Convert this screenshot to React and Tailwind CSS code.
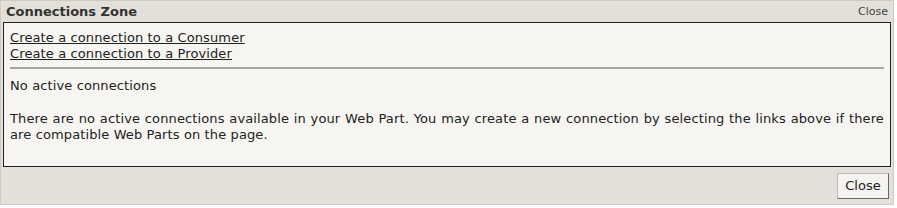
import React from 'react';

export default function App() {
  return (
    <div className="h-[208px] w-[897px] bg-white font-['DejaVu_Sans',Verdana,sans-serif] text-[13px] text-[#222]">
      <div className="flex h-[205px] w-[894px] flex-col border border-[#cfcbc2] bg-[#e3e0d9]">
        <div className="flex h-[21px] items-center justify-between px-[5px] pt-[1px]">
          <span className="font-bold text-[#333]">Connections Zone</span>
          <a href="#" className="text-[11px] text-[#444]">Close</a>
        </div>
        <div className="mx-[2px] flex h-[145px] flex-col border border-[#222] bg-[#f6f5f1] px-[6px] pt-[7px] leading-[16px] tracking-[0.12px]">
          <a href="#" className="self-start underline">Create a connection to a Consumer</a>
          <a href="#" className="self-start underline">Create a connection to a Provider</a>
          <hr className="mt-[5px] border-t-2 border-[#a7a5a0]" />
          <p className="mt-[9px]">No active connections</p>
          <p className="mt-[17px] text-justify">
            There are no active connections available in your Web Part. You may create a new connection by selecting the links above if there are compatible Web Parts on the page.
          </p>
        </div>
        <div className="flex flex-1 items-center justify-end pr-[4px]">
          <button className="h-[26px] w-[52px] border border-[#bbb] border-b-[#666] border-r-[#666] bg-[#f4f3ef] text-[13px] text-[#222]">Close</button>
        </div>
      </div>
    </div>
  );
}
